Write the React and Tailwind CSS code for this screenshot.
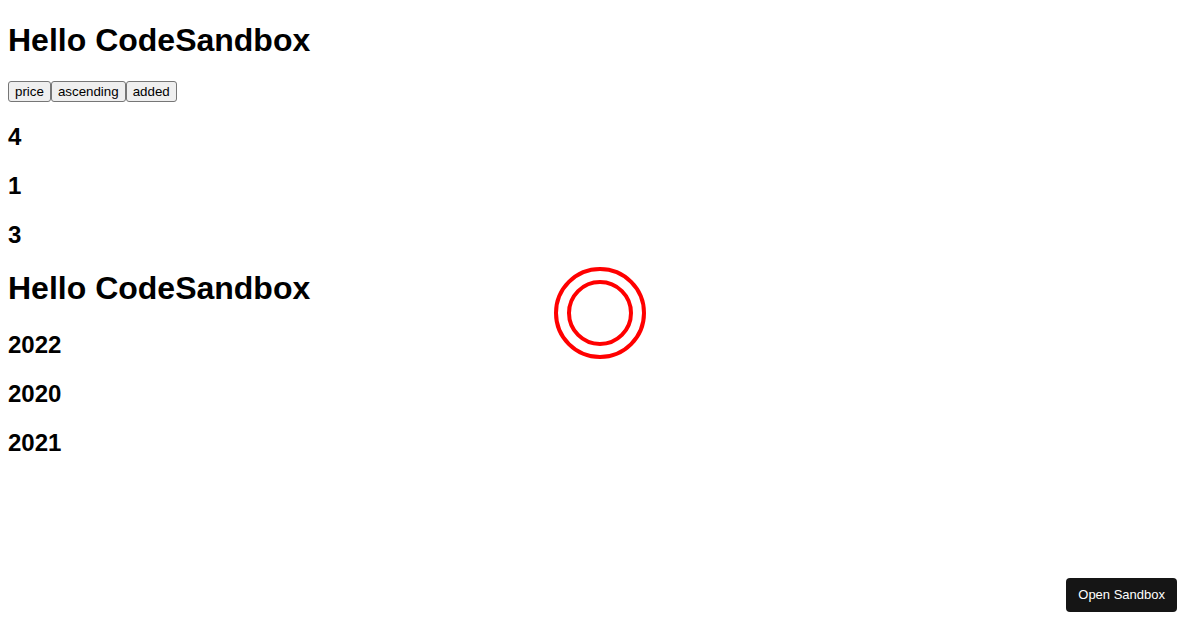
import React from "react";

const buttons = ["price", "ascending", "added"];
const prices = [4, 1, 3];
const years = [2022, 2020, 2021];

function Spinner() {
  return (
    <div className="fixed left-1/2 top-[calc(50%-2px)] -translate-x-1/2 -translate-y-1/2">
      <svg width="96" height="96" viewBox="0 0 96 96" fill="none">
        <circle cx="48" cy="48" r="44" stroke="#ff0000" strokeWidth="4" />
        <circle cx="48" cy="48" r="31" stroke="#ff0000" strokeWidth="4" />
      </svg>
    </div>
  );
}

export default function App() {
  return (
    <div className="min-h-screen bg-white px-2 py-[0.1px] text-black font-['Liberation_Sans',Arial,sans-serif]">
      <h1 className="my-[21.44px] text-[32px] font-bold leading-[normal]">Hello CodeSandbox</h1>

      <div className="flex pt-[1px]">
        {buttons.map((label) => (
          <button
            key={label}
            className="rounded-[3px] border border-[#767676] bg-[#efefef] px-[6px] py-[2px] text-[13.33px] leading-[15px]"
          >
            {label}
          </button>
        ))}
      </div>

      {prices.map((p) => (
        <h2 key={p} className="my-[21px] text-[24px] font-bold leading-[normal]">
          {p}
        </h2>
      ))}

      <h1 className="mb-[24px] mt-[21.44px] text-[32px] font-bold leading-[normal]">Hello CodeSandbox</h1>

      {years.map((y) => (
        <h2 key={y} className="my-[21px] text-[24px] font-bold leading-[normal]">
          {y}
        </h2>
      ))}

      <Spinner />

      <button className="fixed bottom-[18px] right-[23px] rounded-[4px] bg-[#151515] px-[12px] py-[8px] text-[13px] leading-[18px] text-white">
        Open Sandbox
      </button>
    </div>
  );
}
